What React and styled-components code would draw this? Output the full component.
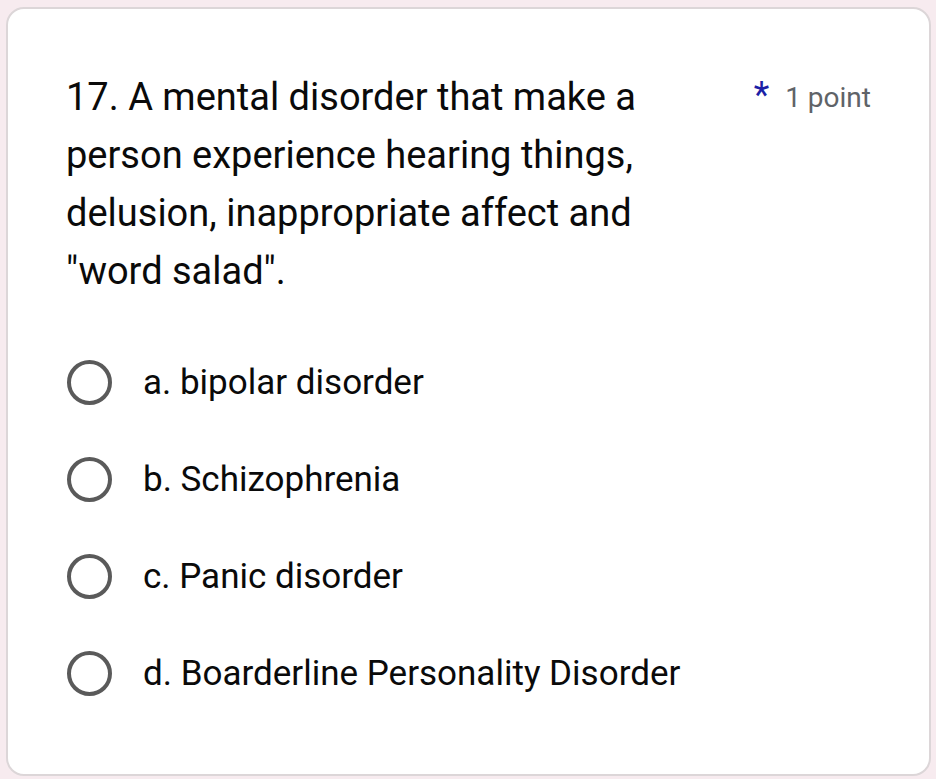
import styled, { createGlobalStyle } from "styled-components";

const Global = createGlobalStyle`
  html, body {
    margin: 0;
    padding: 0;
    background: #f7ebef;
  }
  body {
    font-family: Roboto, "Noto Sans", sans-serif;
  }
`;

const Page = styled.div`
  width: 936px;
  height: 779px;
  box-sizing: border-box;
  padding: 7px 5px 3px 6px;
`;

const Card = styled.div`
  height: 100%;
  box-sizing: border-box;
  background: #ffffff;
  border: 2px solid #dcd6d8;
  border-radius: 18px;
  padding: 59px 58px 0 58px;
`;

const Header = styled.div`
  display: flex;
  align-items: flex-start;
  justify-content: space-between;
`;

const Question = styled.div`
  width: 620px;
  font-size: 38px;
  line-height: 58px;
  color: #0a0a0a;
`;

const Points = styled.div`
  display: flex;
  align-items: flex-start;
  padding-top: 13px;
  padding-right: 0;
  font-size: 28px;
  color: #5f6368;
`;

const Star = styled.span`
  color: #1c1fa6;
  font-size: 36px;
  line-height: 28px;
  margin-right: 16px;
`;

const Options = styled.div`
  display: flex;
  flex-direction: column;
  gap: 52px;
  margin-top: 60px;
`;

const Option = styled.label`
  display: flex;
  align-items: center;
  gap: 31px;
  height: 45px;
  font-size: 35px;
  color: #0a0a0a;
`;

const Radio = styled.span`
  width: 45px;
  height: 45px;
  box-sizing: border-box;
  border: 4px solid #5a5a5a;
  border-radius: 50%;
  margin-left: 1px;
  flex-shrink: 0;
`;

const choices = [
  "a. bipolar disorder",
  "b. Schizophrenia",
  "c. Panic disorder",
  "d. Boarderline Personality Disorder",
];

export default function App() {
  return (
    <Page>
      <Global />
      <Card>
        <Header>
          <Question>
            17. A mental disorder that make a person experience hearing things,
            delusion, inappropriate affect and "word salad".
          </Question>
          <Points>
            <Star>*</Star>1 point
          </Points>
        </Header>
        <Options>
          {choices.map((c) => (
            <Option key={c}>
              <Radio />
              {c}
            </Option>
          ))}
        </Options>
      </Card>
    </Page>
  );
}
